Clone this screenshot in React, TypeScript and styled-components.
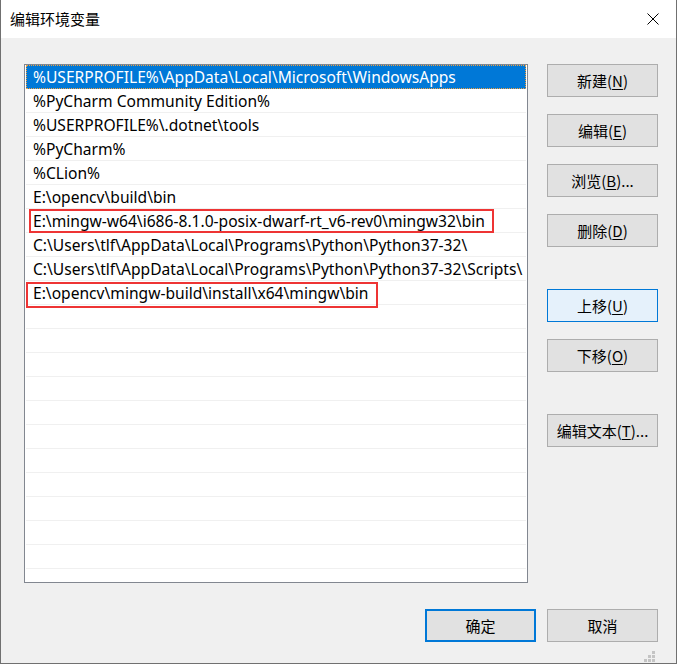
import React from "react";
import styled, { createGlobalStyle } from "styled-components";

const Global = createGlobalStyle`
  html, body { margin: 0; padding: 0; background: #ffffff; }
  * { box-sizing: border-box; }
  body { font-family: "Noto Sans", "Noto Sans CJK SC", sans-serif; }
`;

const Window = styled.div`
  width: 677px;
  height: 664px;
  display: flex;
  flex-direction: column;
  background: #f0f0f0;
  border: 1px solid #707070;
  border-top: none;
  font-size: 15px;
  color: #000;
`;

const TitleBar = styled.div`
  height: 38px;
  background: #ffffff;
  display: flex;
  align-items: center;
  justify-content: space-between;
  padding: 0 0 0 9px;
`;

const Title = styled.span`
  font-family: "Noto Sans CJK SC", sans-serif;
  font-size: 15px;
  line-height: 20px;
`;

const CloseBox = styled.div`
  width: 46px;
  height: 38px;
  display: flex;
  align-items: center;
  justify-content: center;
`;

const Body = styled.div`
  flex: 1;
  display: flex;
  flex-direction: column;
  padding: 26px 18px 0 23px;
`;

const MainRow = styled.div`
  display: flex;
  gap: 19px;
`;

const ListBox = styled.div`
  width: 504px;
  height: 519px;
  background: #ffffff;
  border: 1px solid #828790;
  overflow: hidden;
  display: flex;
  flex-direction: column;
`;

const Row = styled.div<{ $selected?: boolean }>`
  position: relative;
  flex: none;
  height: 24px;
  margin: 0 1px;
  padding: 1px 0 0 7px;
  line-height: 22px;
  font-size: 15.6px;
  white-space: nowrap;
  border-bottom: 1px solid ${(p) => (p.$selected ? "#0078d7" : "#f0f0f0")};
  background: ${(p) => (p.$selected ? "#0078d7" : "transparent")};
  color: ${(p) => (p.$selected ? "#ffffff" : "#000000")};
  outline: ${(p) => (p.$selected ? "1px dotted #f0a040" : "none")};
  outline-offset: -1px;
`;

const Highlight = styled.div<{ $left: number; $top: number; $w: number; $h: number }>`
  position: absolute;
  left: ${(p) => p.$left}px;
  top: ${(p) => p.$top}px;
  width: ${(p) => p.$w}px;
  height: ${(p) => p.$h}px;
  border: 2px solid #ee3434;
  pointer-events: none;
`;

const SideColumn = styled.div`
  display: flex;
  flex-direction: column;
  gap: 17px;
`;

const Button = styled.button<{ $hover?: boolean; $primary?: boolean; $spaced?: boolean }>`
  width: 111px;
  height: 33px;
  margin: 0;
  margin-top: ${(p) => (p.$spaced ? "25px" : "0")};
  padding: 0;
  font-family: "Noto Sans CJK SC", "Noto Sans", sans-serif;
  font-size: 15px;
  line-height: 20px;
  color: #000;
  background: ${(p) => (p.$hover ? "#e5f1fb" : "#e1e1e1")};
  border: ${(p) =>
    p.$primary ? "2px solid #0078d7" : p.$hover ? "1px solid #0078d7" : "1px solid #adadad"};
  border-radius: 0;
  display: flex;
  align-items: center;
  justify-content: center;
`;

const Key = styled.span`
  text-decoration: underline;
  text-underline-offset: 2px;
`;

const Footer = styled.div`
  display: flex;
  justify-content: flex-end;
  gap: 11px;
  margin-top: 26px;
`;

const Grip = styled.svg`
  position: absolute;
  right: 3px;
  bottom: 1px;
`;

const Relative = styled.div`
  position: relative;
  flex: 1;
`;

const items = [
  "%USERPROFILE%\\AppData\\Local\\Microsoft\\WindowsApps",
  "%PyCharm Community Edition%",
  "%USERPROFILE%\\.dotnet\\tools",
  "%PyCharm%",
  "%CLion%",
  "E:\\opencv\\build\\bin",
  "E:\\mingw-w64\\i686-8.1.0-posix-dwarf-rt_v6-rev0\\mingw32\\bin",
  "C:\\Users\\tlf\\AppData\\Local\\Programs\\Python\\Python37-32\\",
  "C:\\Users\\tlf\\AppData\\Local\\Programs\\Python\\Python37-32\\Scripts\\",
  "E:\\opencv\\mingw-build\\install\\x64\\mingw\\bin",
];

const highlights: Record<number, { left: number; top: number; w: number; h: number }> = {
  6: { left: 3, top: 0, w: 465, h: 24 },
  9: { left: 0, top: 1, w: 352, h: 26 },
};

const TOTAL_ROWS = 22;

export default function App() {
  const rows = Array.from({ length: TOTAL_ROWS }, (_, i) => items[i] ?? "");
  return (
    <>
      <Global />
      <Window>
        <TitleBar>
          <Title>编辑环境变量</Title>
          <CloseBox>
            <svg width="12" height="12" viewBox="0 0 12 12">
              <path d="M0.5 0.5 L11.5 11.5 M11.5 0.5 L0.5 11.5" stroke="#000" strokeWidth="1" fill="none" />
            </svg>
          </CloseBox>
        </TitleBar>
        <Body>
          <MainRow>
            <ListBox>
              {rows.map((t, i) => (
                <Row key={i} $selected={i === 0}>
                  {t}
                  {highlights[i] && (
                    <Highlight
                      $left={highlights[i].left}
                      $top={highlights[i].top}
                      $w={highlights[i].w}
                      $h={highlights[i].h}
                    />
                  )}
                </Row>
              ))}
            </ListBox>
            <SideColumn>
              <Button>
                新建(<Key>N</Key>)
              </Button>
              <Button>
                编辑(<Key>E</Key>)
              </Button>
              <Button>
                浏览(<Key>B</Key>)...
              </Button>
              <Button>
                删除(<Key>D</Key>)
              </Button>
              <Button $hover $spaced>
                上移(<Key>U</Key>)
              </Button>
              <Button>
                下移(<Key>O</Key>)
              </Button>
              <Button $spaced>
                编辑文本(<Key>T</Key>)...
              </Button>
            </SideColumn>
          </MainRow>
          <Relative>
            <Footer>
              <Button $primary>确定</Button>
              <Button>取消</Button>
            </Footer>
            <Grip width="11" height="11" viewBox="0 0 11 11">
              <rect x="8" y="0" width="3" height="3" fill="#c4c4c4" />
              <rect x="4" y="4" width="3" height="3" fill="#c4c4c4" />
              <rect x="8" y="4" width="3" height="3" fill="#c4c4c4" />
              <rect x="0" y="8" width="3" height="3" fill="#c4c4c4" />
              <rect x="4" y="8" width="3" height="3" fill="#c4c4c4" />
              <rect x="8" y="8" width="3" height="3" fill="#c4c4c4" />
            </Grip>
          </Relative>
        </Body>
      </Window>
    </>
  );
}
